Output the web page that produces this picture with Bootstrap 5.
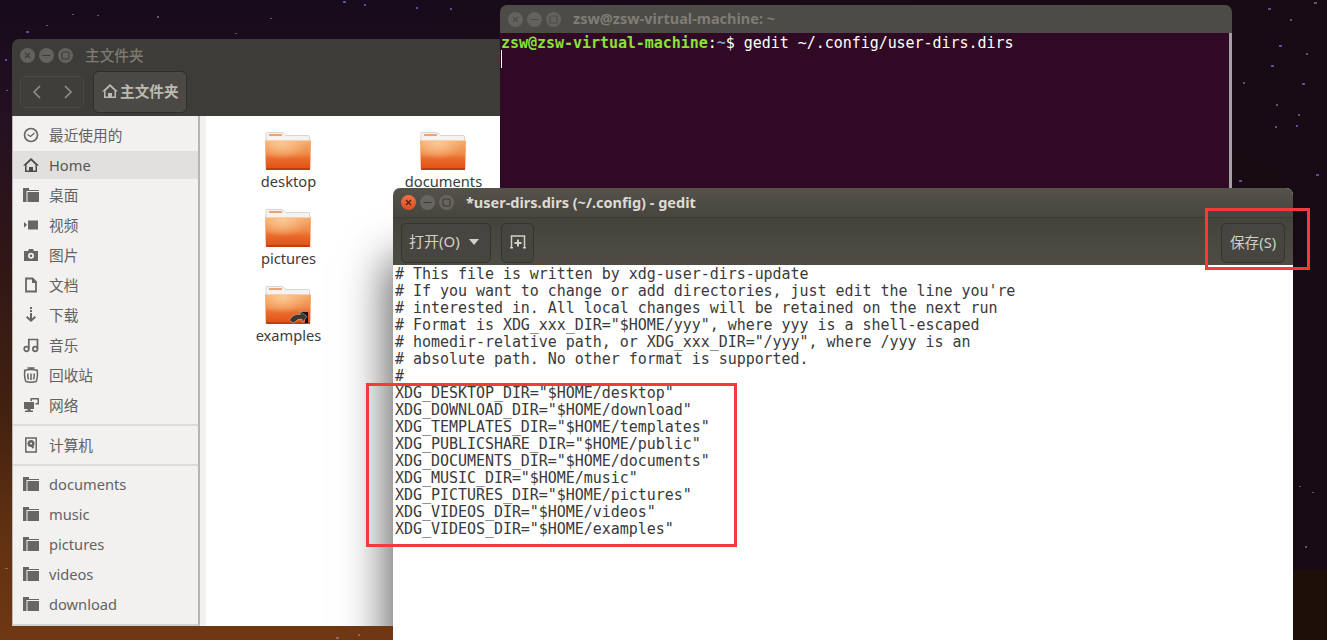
<!DOCTYPE html>
<html lang="zh">
<head>
<meta charset="utf-8">
<title>Ubuntu desktop</title>
<link rel="stylesheet" href="https://cdn.jsdelivr.net/npm/bootstrap@5.3.0/dist/css/bootstrap.min.css">
<style>
html,body{margin:0;height:100%;overflow:hidden;background:#1a0a14}
body{font-family:"Noto Sans","Noto Sans CJK SC",sans-serif;font-size:14.67px}
.desk{width:1327px;height:640px;overflow:hidden;
 background:
  linear-gradient(#1e0f08,#1e0f08) right bottom/100px 70px no-repeat,
  linear-gradient(90deg,rgba(20,8,18,0) 0,rgba(20,8,18,0) 400px,rgba(24,10,18,1) 1300px),
  linear-gradient(180deg,#170a1a 0,#231022 110px,#301616 260px,#44220f 420px,#5e3011 520px,#703812 640px)}
.stars{left:0;top:0}
.win{border-radius:7px 7px 0 0;overflow:hidden}
.fm{left:12px;top:39px;width:600px;height:587px;background:#3d3c38}
.fm-title{height:32px;padding-left:8px;color:#7d7b73;font-weight:500;font-size:14.67px}
.win-name{margin-left:8px}
.tl{width:15px;height:15px;border-radius:50%;background:#63625c;margin-right:4px;flex:none}
.tl svg{display:block}
.tl-red{background:linear-gradient(180deg,#ec7345,#dc4e20)}
.fm-tools{height:45px;padding:0 0 3px 8px}
.seg{width:64px;height:32px;border:1px solid #4a4944;border-radius:5px;background:#3f3e3a;margin-top:-1px}
.pathbtn{margin-left:9px;width:94px;height:42px;border:1px solid #2e2d2a;outline:1px solid #4b4a45;outline-offset:-2px;border-radius:6px;background:#4a4945;color:#bdbab1;font-weight:700;font-size:14.67px;gap:2px;padding:0 0 2px 8px}
.fm-body{height:510px}
.side{width:188px;flex:none;background:#f2f1f0;border-left:1px solid #bbb9b5;border-right:2px solid #b7b5b1;border-bottom:2px solid #d4d3d0;padding-top:5px;color:#626262}
.side-row{height:28px;margin-bottom:2px;gap:10px;padding-left:10px;white-space:nowrap}
.side-row.on{background:#e1e0de}
.side-row svg{flex:none}
.home-label{color:#555;margin-top:-1px}
.side-line{height:2px;background:#dcdbd8;margin:3px 0 5px}
.side-line-b{margin:3px 0 4px}
.view{flex:1;background:#fff;border-left:6px solid #f3f2f1;position:relative;overflow:hidden}
.items{display:grid;grid-template-columns:155px 155px;grid-auto-rows:77px;padding:16px 0 0 5px;color:#3c3c3c;font-size:14.67px}
.item{width:155px}
.item svg{margin-right:2px}
.item span{line-height:20px;margin-top:1px}
.col-first{grid-column:1}
.caster{position:absolute;left:187px;top:149px;width:800px;height:600px;box-shadow:0 0 42px 6px rgba(0,0,0,.62)}
.term{left:500px;top:5px;width:732px;height:183px;background:#300a24}
.term-title{height:28px;padding-left:8px;background:#4c4b45;color:#7f7d75;font-weight:700;font-size:14.5px}
.term-body{height:155px;border-right:3px solid #a5a0a4;padding:2px 0 0 1px;color:#fff;position:relative}
.mono{font-family:"DejaVu Sans Mono","Liberation Mono",monospace;font-size:15px;line-height:17px;margin:0;letter-spacing:-.04px}
.g{color:#8ae234;font-weight:700}
.b{color:#729fcf;font-weight:700}
.caret{width:1px;height:18px;background:#fff;margin-top:-2px}
.gedit{left:393px;top:188px;width:900px;height:452px;background:#fff}
.ged-title{height:30px;padding-left:8px;background:linear-gradient(180deg,#54524a,#47453f);color:#dfdbd2;font-weight:700;font-size:14.5px;border-bottom:1px solid #3b3a35}
.tl-act{background:#66655f}
.ged-tools{height:47px;padding:3px 8px 0;background:linear-gradient(180deg,#44433c,#4e4c45)}
.gbtn{height:40px;border:1px solid #35342f;border-radius:5px;background:#46453f;color:#d3d0c7;font-size:14.67px;padding:0 0 3px;margin:0;--bs-btn-color:#d3d0c7;--bs-btn-hover-color:#d3d0c7}
.gbtn-open{width:90px;gap:8px;font-size:15px;padding-left:7px}
.gbtn-new{width:33px;margin-left:10px}
.gbtn-save{width:64px}
.editor{padding:1px 0 0 2px;color:#3a3a3a;height:375px;overflow:hidden}
.redbox{border:3px solid #f63a3a;pointer-events:none}
.red-a{left:366px;top:383px;width:371px;height:164px}
.red-b{left:1205px;top:208px;width:105px;height:62px}
.hidden-defs{width:0;height:0;overflow:hidden}
</style>
</head>
<body>
<svg class="hidden-defs position-absolute" aria-hidden="true">
 <defs>
  <linearGradient id="fg" x1="0" y1="0" x2="0" y2="1"><stop offset="0" stop-color="#f6ae6e"/><stop offset=".45" stop-color="#ef8a48"/><stop offset=".62" stop-color="#e96a2c"/><stop offset="1" stop-color="#e24c12"/></linearGradient>
  <radialGradient id="fh" cx=".38" cy=".1" r=".55"><stop offset="0" stop-color="#fbd0a0" stop-opacity=".8"/><stop offset="1" stop-color="#fbd0a0" stop-opacity="0"/></radialGradient>
 </defs>
 <symbol id="folder" viewBox="0 0 46 38">
  <path d="M1 10V1.500Q1 .5 2 .5H17L21 3.500H43.500Q44.500 3.500 44.500 4.500V10Z" fill="#f4f3f1" stroke="#cfcdc9" stroke-width=".8"/>
  <rect x="4" y="2" width="13" height="2" fill="#f2a270"/>
  <path d="M0 8.500H46L45.200 36.500Q45 38 43.500 38H2.500Q1 38 .8 36.500Z" fill="url(#fg)"/>
  <path d="M0 8.500H46L45.200 36.500Q45 38 43.500 38H2.500Q1 38 .8 36.500Z" fill="url(#fh)"/>
  <path d="M1 37H45" stroke="#b23a10" stroke-width="1.400"/>
 </symbol>
 <symbol id="i-folder" viewBox="0 0 16 16"><path fill="#666" d="M0 1h6v2h10v1H3.500v11H0zM4.500 5H16v10H4.500z"/></symbol>
 <symbol id="i-clock" viewBox="0 0 16 16"><circle cx="8" cy="8" r="6.500" fill="none" stroke="#666" stroke-width="1.700"/><path d="M4.500 7.500L7.500 9.500L11.500 6" fill="none" stroke="#666" stroke-width="1.300"/></symbol>
 <symbol id="i-home" viewBox="0 0 16 16"><path fill="#4b4b4b" d="M8 1L16 8.500H14V15H2V8.500H0zM8 3.600L3.500 7.800V13.500H6V10H10V13.500H12.500V7.800z"/></symbol>
 <symbol id="i-video" viewBox="0 0 16 16"><path fill="#666" d="M5 3.500H15V12.500H5zM1 5L4 7.800 1 10.800z"/></symbol>
 <symbol id="i-cam" viewBox="0 0 16 16"><path fill="#666" fill-rule="evenodd" d="M1 4H5L6 2H10L11 4H15V14H1zM8 5.800A3 3 0 1 0 8 11.800 3 3 0 1 0 8 5.800zM8 7.500A1.300 1.300 0 1 1 8 10.100 1.300 1.300 0 1 1 8 7.500z"/></symbol>
 <symbol id="i-doc" viewBox="0 0 16 16"><path fill="none" stroke="#666" stroke-width="1.800" d="M3 1.500H9.500L13 5V14.500H3z"/><path fill="#666" d="M9 1H10L13.500 4.500V6H9z"/></symbol>
 <symbol id="i-dl" viewBox="0 0 16 16"><path fill="#666" d="M7 0h2v2H7zM7 3h2v2H7zM7 6h2v5.500L11.500 9 13 10.400 8 15 3 10.400 4.500 9 7 11.500z"/></symbol>
 <symbol id="i-music" viewBox="0 0 16 16"><path fill="none" stroke="#666" stroke-width="1.700" d="M5.800 11.500V2.500H14.500V11.500"/><circle cx="3.500" cy="12" r="2.300" fill="none" stroke="#666" stroke-width="1.700"/><circle cx="12.200" cy="12" r="2.300" fill="none" stroke="#666" stroke-width="1.700"/></symbol>
 <symbol id="i-trash" viewBox="0 0 16 16"><path fill="none" stroke="#666" stroke-width="1.500" d="M4.500 1H11.500M1 3.500Q8 1.500 15 3.500M1.800 3.800Q1 10 2.800 14.500Q8 16 13.200 14.500Q15 10 14.200 3.800M5 6.500Q4.500 9.500 5.500 12.500M8 6.500V13M11 6.500Q11.500 9.500 10.500 12.500"/></symbol>
 <symbol id="i-net" viewBox="0 0 16 16"><path fill="#666" d="M1 5H11V12H7.500V13.500H10V15H2V13.500H4.500V12H1zM7.500 1H16V7.500H12.500V6H14.500V2.500H9V4H7.500z"/></symbol>
 <symbol id="i-comp" viewBox="0 0 16 16"><path fill="none" stroke="#666" stroke-width="1.500" d="M2.800 1H13.200V15H2.800z"/><circle cx="8" cy="6.500" r="3.500" fill="#666"/><path d="M7 7L10.500 11" stroke="#666" stroke-width="2"/><circle cx="8" cy="6.500" r="1" fill="#f2f1f0"/></symbol>
 <symbol id="i-x" viewBox="0 0 15 15"><path d="M5 5L10 10M10 5L5 10" stroke="currentColor" stroke-width="1.100"/></symbol>
 <symbol id="i-min" viewBox="0 0 15 15"><path d="M3.500 7.500H11.500" stroke="currentColor" stroke-width="1.100"/></symbol>
 <symbol id="i-max" viewBox="0 0 15 15"><rect x="4" y="4" width="7" height="7" rx="1" fill="none" stroke="currentColor" stroke-width="1.100"/></symbol>
</svg>

<div class="desk position-relative">
 <svg class="stars position-absolute" width="1327" height="640" aria-hidden="true">
  <g fill="#7d7dff" opacity=".6">
   <rect x="26" y="31" width="3" height="2"/><rect x="343" y="1" width="3" height="2"/><rect x="364" y="4" width="2" height="2"/><rect x="416" y="7" width="2" height="2"/><rect x="450" y="8" width="2" height="2"/>
   <rect x="1268" y="8" width="3" height="2"/><rect x="1279" y="45" width="3" height="2"/><rect x="1271" y="65" width="3" height="2"/><rect x="1302" y="83" width="3" height="2"/><rect x="1275" y="126" width="2" height="2"/><rect x="1296" y="125" width="2" height="2"/><rect x="1316" y="174" width="3" height="2"/><rect x="1239" y="180" width="3" height="2"/><rect x="5" y="59" width="2" height="2"/><rect x="6" y="90" width="2" height="1"/>
  </g>
  <g fill="#b98ab0" opacity=".55">
   <rect x="1314" y="2" width="3" height="2"/><rect x="1290" y="19" width="2" height="2"/><rect x="1306" y="53" width="2" height="2"/><rect x="1243" y="82" width="2" height="2"/><rect x="1276" y="104" width="2" height="2"/><rect x="1298" y="114" width="2" height="2"/><rect x="46" y="25" width="2" height="1"/><rect x="97" y="15" width="2" height="1"/><rect x="270" y="18" width="2" height="1"/><rect x="235" y="33" width="2" height="1"/><rect x="72" y="14" width="2" height="1"/><rect x="5" y="568" width="3" height="1"/><rect x="157" y="16" width="2" height="2"/>
   <rect x="336" y="637" width="3" height="2"/><rect x="358" y="634" width="2" height="2"/><rect x="1299" y="486" width="2" height="1"/><rect x="1312" y="492" width="2" height="1"/><rect x="1305" y="546" width="2" height="2"/>
  </g>
 </svg>

 <section class="win fm position-absolute">
  <div class="fm-title d-flex align-items-center">
   <span class="tl d-flex" style="color:#3d3c38"><svg width="15" height="15"><use href="#i-x"/></svg></span>
   <span class="tl d-flex" style="color:#3d3c38"><svg width="15" height="15"><use href="#i-min"/></svg></span>
   <span class="tl d-flex" style="color:#3d3c38"><svg width="15" height="15"><use href="#i-max"/></svg></span>
   <span class="win-name">主文件夹</span>
  </div>
  <div class="fm-tools d-flex align-items-center">
   <div class="seg d-flex align-items-center justify-content-around">
    <svg width="10" height="16" viewBox="0 0 10 16"><path d="M8 2L2 8L8 14" fill="none" stroke="#8f8d86" stroke-width="1.600"/></svg>
    <svg width="10" height="16" viewBox="0 0 10 16"><path d="M2 2L8 8L2 14" fill="none" stroke="#8f8d86" stroke-width="1.600"/></svg>
   </div>
   <div class="pathbtn d-flex align-items-center">
    <svg width="16" height="16" viewBox="0 0 16 16"><path fill="#bdbab1" d="M8 1L16 8.500H14V15H2V8.500H0zM8 3.600L3.500 7.800V13.500H6V10H10V13.500H12.500V7.800z"/></svg>
    <span>主文件夹</span>
   </div>
  </div>
  <div class="fm-body d-flex position-relative">
   <nav class="side d-flex flex-column">
    <div class="side-row d-flex align-items-center"><svg width="16" height="16"><use href="#i-clock"/></svg>最近使用的</div>
    <div class="side-row on d-flex align-items-center"><svg width="16" height="16"><use href="#i-home"/></svg><span class="home-label">Home</span></div>
    <div class="side-row d-flex align-items-center"><svg width="16" height="16"><use href="#i-folder"/></svg>桌面</div>
    <div class="side-row d-flex align-items-center"><svg width="16" height="16"><use href="#i-video"/></svg>视频</div>
    <div class="side-row d-flex align-items-center"><svg width="16" height="16"><use href="#i-cam"/></svg>图片</div>
    <div class="side-row d-flex align-items-center"><svg width="16" height="16"><use href="#i-doc"/></svg>文档</div>
    <div class="side-row d-flex align-items-center"><svg width="16" height="16"><use href="#i-dl"/></svg>下载</div>
    <div class="side-row d-flex align-items-center"><svg width="16" height="16"><use href="#i-music"/></svg>音乐</div>
    <div class="side-row d-flex align-items-center"><svg width="16" height="16"><use href="#i-trash"/></svg>回收站</div>
    <div class="side-row d-flex align-items-center"><svg width="16" height="16"><use href="#i-net"/></svg>网络</div>
    <div class="side-line"></div>
    <div class="side-row d-flex align-items-center"><svg width="16" height="16"><use href="#i-comp"/></svg>计算机</div>
    <div class="side-line side-line-b"></div>
    <div class="side-row d-flex align-items-center"><svg width="16" height="16"><use href="#i-folder"/></svg>documents</div>
    <div class="side-row d-flex align-items-center"><svg width="16" height="16"><use href="#i-folder"/></svg>music</div>
    <div class="side-row d-flex align-items-center"><svg width="16" height="16"><use href="#i-folder"/></svg>pictures</div>
    <div class="side-row d-flex align-items-center"><svg width="16" height="16"><use href="#i-folder"/></svg>videos</div>
    <div class="side-row d-flex align-items-center"><svg width="16" height="16"><use href="#i-folder"/></svg>download</div>
   </nav>
   <main class="view">
    <div class="items">
     <div class="item d-flex flex-column align-items-center"><svg width="46" height="38"><use href="#folder"/></svg><span>desktop</span></div>
     <div class="item d-flex flex-column align-items-center"><svg width="46" height="38"><use href="#folder"/></svg><span>documents</span></div>
     <div class="item col-first d-flex flex-column align-items-center"><svg width="46" height="38"><use href="#folder"/></svg><span>pictures</span></div>
     <div class="item col-first d-flex flex-column align-items-center">
      <svg width="46" height="38" viewBox="0 0 46 38"><use href="#folder" width="46" height="38"/>
       <path d="M35 26H43V37H40V29H35Z" fill="#111"/>
       <path d="M24.500 34Q28 27.500 35.500 28.500L35 25.500L42 30.500L37.500 36.500L36.800 33Q32 32.500 29 37Q26.500 36.500 24.500 34Z" fill="#3f3330" stroke="#d9d4d0" stroke-width=".5"/>
      </svg>
      <span>examples</span>
     </div>
    </div>
    <div class="caster"></div>
   </main>
  </div>
 </section>

 <section class="win term position-absolute">
  <div class="term-title d-flex align-items-center">
   <span class="tl d-flex" style="color:#4c4b45"><svg width="15" height="15"><use href="#i-x"/></svg></span>
   <span class="tl d-flex" style="color:#4c4b45"><svg width="15" height="15"><use href="#i-min"/></svg></span>
   <span class="tl d-flex" style="color:#4c4b45"><svg width="15" height="15"><use href="#i-max"/></svg></span>
   <span class="win-name">zsw@zsw-virtual-machine: ~</span>
  </div>
  <div class="term-body">
   <p class="mono"><span class="g">zsw@zsw-virtual-machine</span>:<span class="b">~</span>$ gedit ~/.config/user-dirs.dirs</p>
   <div class="caret"></div>
  </div>
 </section>

 <section class="win gedit position-absolute">
  <div class="ged-title d-flex align-items-center">
   <span class="tl tl-red d-flex" style="color:#4a2010"><svg width="15" height="15"><use href="#i-x"/></svg></span>
   <span class="tl tl-act d-flex" style="color:#3a3934"><svg width="15" height="15"><use href="#i-min"/></svg></span>
   <span class="tl tl-act d-flex" style="color:#3a3934"><svg width="15" height="15"><use href="#i-max"/></svg></span>
   <span class="win-name">*user-dirs.dirs (~/.config) - gedit</span>
  </div>
  <div class="ged-tools d-flex align-items-center">
   <button type="button" class="btn gbtn gbtn-open d-flex align-items-center justify-content-start">打开(O)<svg width="12" height="6" viewBox="0 0 12 6"><path d="M1 0H11L6 6Z" fill="#d3d0c7"/></svg></button>
   <button type="button" class="btn gbtn gbtn-new d-flex align-items-center justify-content-center"><svg width="16" height="16" viewBox="0 0 16 16"><path fill="none" stroke="#d3d0c7" stroke-width="1.500" d="M1.500 14V2H14.500V14"/><path fill="#d3d0c7" d="M0 13h3v1.500H0zM13 13h3v1.500h-3zM7 5.500h2V8h2.500v2H9v2.500H7V10H4.500V8H7z"/></svg></button>
   <button type="button" class="btn gbtn gbtn-save ms-auto d-flex align-items-center justify-content-center">保存(S)</button>
  </div>
  <pre class="editor mono"># This file is written by xdg-user-dirs-update
# If you want to change or add directories, just edit the line you're
# interested in. All local changes will be retained on the next run
# Format is XDG_xxx_DIR="$HOME/yyy", where yyy is a shell-escaped
# homedir-relative path, or XDG_xxx_DIR="/yyy", where /yyy is an
# absolute path. No other format is supported.
#
XDG_DESKTOP_DIR="$HOME/desktop"
XDG_DOWNLOAD_DIR="$HOME/download"
XDG_TEMPLATES_DIR="$HOME/templates"
XDG_PUBLICSHARE_DIR="$HOME/public"
XDG_DOCUMENTS_DIR="$HOME/documents"
XDG_MUSIC_DIR="$HOME/music"
XDG_PICTURES_DIR="$HOME/pictures"
XDG_VIDEOS_DIR="$HOME/videos"
XDG_VIDEOS_DIR="$HOME/examples"</pre>
 </section>

 <div class="redbox red-a position-absolute"></div>
 <div class="redbox red-b position-absolute"></div>
</div>
<script src="https://cdn.jsdelivr.net/npm/bootstrap@5.3.0/dist/js/bootstrap.bundle.min.js"></script>
</body>
</html>
